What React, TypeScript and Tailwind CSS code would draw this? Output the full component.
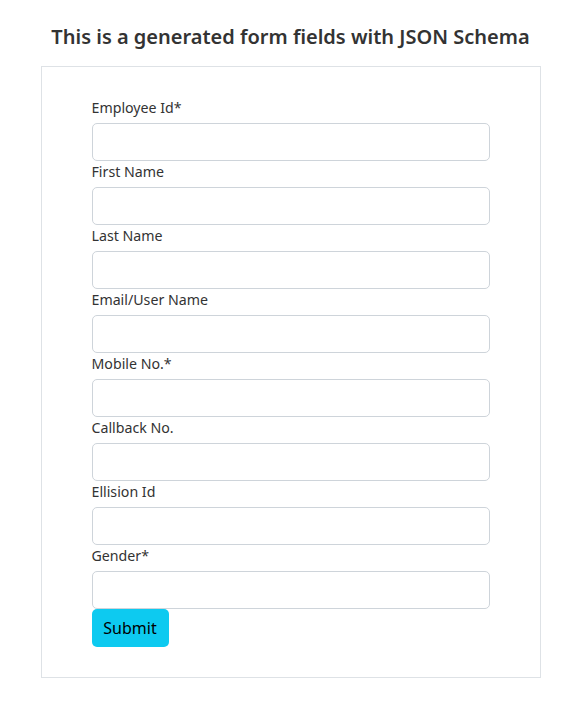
const fields = [
  "Employee Id*",
  "First Name",
  "Last Name",
  "Email/User Name",
  "Mobile No.*",
  "Callback No.",
  "Ellision Id",
  "Gender*",
];

export default function App() {
  return (
    <div className="min-h-screen bg-white pl-[4px] font-['Noto_Sans',sans-serif] text-[#212529]">
      <div className="mx-auto w-[500px]">
        <h1 className="pt-[22px] text-center text-[20px] font-semibold leading-[30px] text-[#333]">
          This is a generated form fields with JSON Schema
        </h1>
        <form
          className="mt-[14px] border border-[#dee2e6] px-[50px] pb-[30px] pt-[30px]"
          onSubmit={(e) => e.preventDefault()}
        >
          {fields.map((label) => (
            <div key={label}>
              <label className="mb-[5px] block text-[14.2px] leading-[21px] text-[#333]">{label}</label>
              <input
                type="text"
                className="block h-[38px] w-full rounded-[5px] border border-[#ced4da] bg-white px-3 text-base outline-none"
              />
            </div>
          ))}
          <button type="submit" className="h-[38px] w-[77px] rounded-[5px] bg-[#0dcaf0] text-base text-black">
            Submit
          </button>
        </form>
      </div>
    </div>
  );
}
